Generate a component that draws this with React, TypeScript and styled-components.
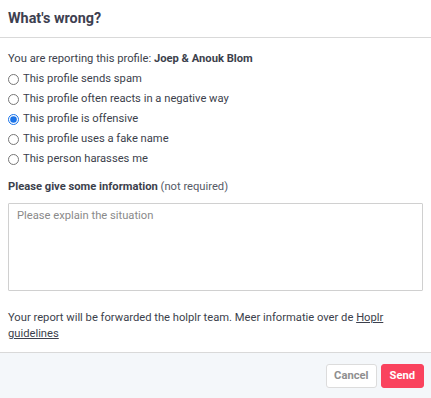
import styled, { createGlobalStyle } from 'styled-components';

const GlobalStyle = createGlobalStyle`
	body {
		margin: 0;
		background: #ffffff;
		font-family: Roboto, 'Liberation Sans', sans-serif;
		color: #3c3f4c;
	}
`;

const Dialog = styled.div`
	width: 431px;
	height: 398px;
	display: flex;
	flex-direction: column;
	background: #ffffff;
`;

const Header = styled.div`
	height: 38px;
	display: flex;
	align-items: center;
	padding: 0 8px;
	border-bottom: 1px solid #d9d9d9;
	box-sizing: border-box;
`;

const Title = styled.h3`
	margin: 0;
	font-size: 14.4px;
	font-weight: 700;
	color: #3d4050;
`;

const Body = styled.div`
	flex: 1;
	padding: 11px 8px 0;
	font-size: 11.2px;
	line-height: 20px;
`;

const Strong = styled.strong`
	font-weight: 700;
`;

const Option = styled.label`
	display: flex;
	align-items: center;
	height: 20px;
	gap: 4px;
	cursor: pointer;
`;

const Radio = styled.input`
	margin: 0;
	width: 11px;
	height: 11px;
	accent-color: #1a73e8;
`;

const SectionLabel = styled.div`
	margin-top: 8px;
`;

const Muted = styled.span`
	font-weight: 400;
	color: #555a66;
`;

const TextArea = styled.textarea`
	display: block;
	box-sizing: border-box;
	width: 100%;
	height: 88px;
	margin-top: 6px;
	padding: 4px 8px;
	border: 1px solid #d0d0d0;
	border-radius: 1px;
	resize: none;
	font-family: inherit;
	font-size: 11.2px;
	line-height: 16px;
	color: #3c3f4c;

	&::placeholder {
		color: #8a8a8a;
	}
`;

const Notice = styled.p`
	margin: 19px 0 0;
	line-height: 16px;
`;

const Link = styled.a`
	color: inherit;
	text-decoration: underline;
`;

const Footer = styled.div`
	height: 46px;
	display: flex;
	align-items: center;
	justify-content: flex-end;
	gap: 4px;
	padding: 0 7px;
	background: #f4f7fa;
	border-top: 1px solid #d9d9d9;
	box-sizing: border-box;
`;

const Button = styled.button<{ $primary?: boolean }>`
	height: 24px;
	padding: 0 ${(p) => (p.$primary ? '8px' : '7px')};
	border-radius: 3px;
	font-family: inherit;
	font-size: 11.2px;
	font-weight: 700;
	cursor: pointer;
	border: 1px solid ${(p) => (p.$primary ? '#fa435e' : '#dcdcdc')};
	background: ${(p) => (p.$primary ? '#fa435e' : '#ffffff')};
	color: ${(p) => (p.$primary ? '#ffffff' : '#8f8f8f')};
`;

const reasons = [
	'This profile sends spam',
	'This profile often reacts in a negative way',
	'This profile is offensive',
	'This profile uses a fake name',
	'This person harasses me',
];

const App = () => {
	return (
		<Dialog>
			<GlobalStyle />
			<Header>
				<Title>What's wrong?</Title>
			</Header>
			<Body>
				<div>
					You are reporting this profile: <Strong>Joep &amp; Anouk Blom</Strong>
				</div>
				{reasons.map((reason, i) => (
					<Option key={reason}>
						<Radio type='radio' name='reason' defaultChecked={i === 2} />
						{reason}
					</Option>
				))}
				<SectionLabel>
					<Strong>Please give some information</Strong> <Muted>(not required)</Muted>
				</SectionLabel>
				<TextArea placeholder='Please explain the situation' />
				<Notice>
					Your report will be forwarded the holplr team. Meer informatie over de{' '}
					<Link href='#'>Hoplr guidelines</Link>
				</Notice>
			</Body>
			<Footer>
				<Button>Cancel</Button>
				<Button $primary>Send</Button>
			</Footer>
		</Dialog>
	);
};

export default App;
